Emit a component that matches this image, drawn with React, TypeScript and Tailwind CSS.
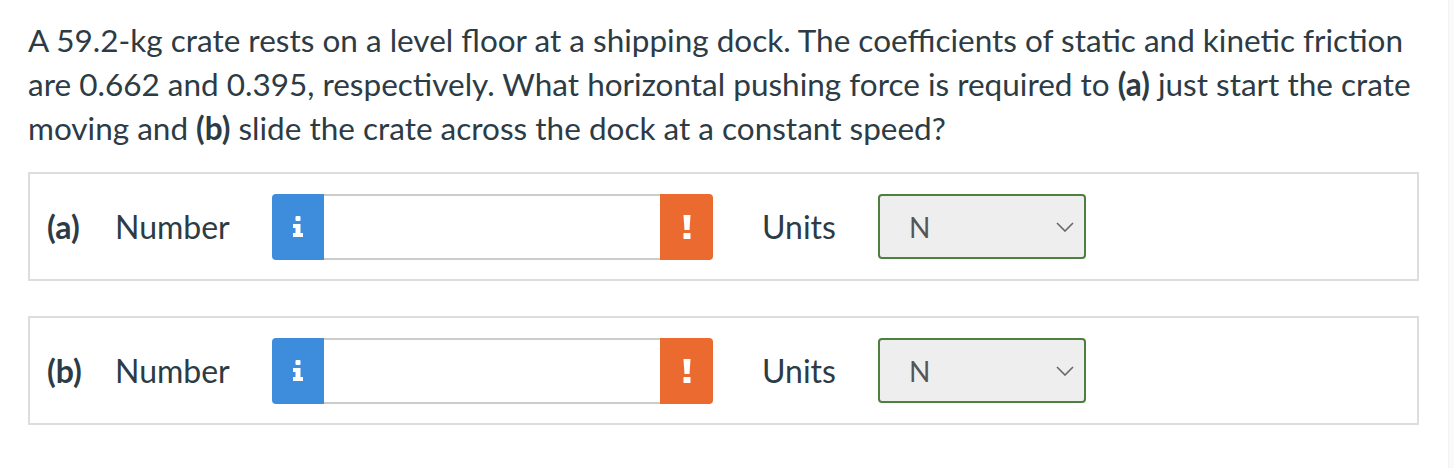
import React from "react";

const InfoIcon: React.FC = () => (
  <svg width="12" height="22" viewBox="0 0 12 22" fill="#fff">
    <rect x="3.5" y="0" width="5" height="5" rx="1" />
    <path d="M1 8h7.5v9H11v4H1v-4h2.5v-5H1z" />
  </svg>
);

const AlertIcon: React.FC = () => (
  <svg width="8" height="24" viewBox="0 0 8 24" fill="#fff">
    <path d="M0.5 0h7l-1 15h-5z" />
    <rect x="0.5" y="18" width="7" height="6" rx="0.5" />
  </svg>
);

const Chevron: React.FC = () => (
  <svg width="18" height="10" viewBox="0 0 18 10" fill="none" stroke="#666" strokeWidth="1.6">
    <path d="M1 1l8 8 8-8" />
  </svg>
);

const AnswerRow: React.FC<{ part: string }> = ({ part }) => (
  <div className="flex h-[109px] w-[1391px] items-center border-2 border-[#dddddd] pl-[17px] text-[32px]">
    <span className="w-[68px] font-bold">({part})</span>
    <span className="w-[157px]">Number</span>
    <div className="flex h-[66px] items-stretch">
      <button className="flex w-[52px] items-center justify-center rounded-l-[4px] bg-[#3e8ddd]">
        <InfoIcon />
      </button>
      <input
        className="w-[336px] border-y-2 border-[#cccccc] bg-white outline-none"
        type="text"
      />
      <button className="flex w-[53px] items-center justify-center rounded-r-[4px] bg-[#ea6a30]">
        <AlertIcon />
      </button>
    </div>
    <span className="ml-[49px] w-[116px]">Units</span>
    <div className="flex h-[65px] w-[208px] items-center justify-between rounded-[4px] border-2 border-[#4d7f41] bg-[#eeeeee] pl-[29px] pr-[10px]">
      <span className="text-[28px] text-[#555555]">N</span>
      <Chevron />
    </div>
  </div>
);

const App: React.FC = () => {
  return (
    <div className="flex h-[468px] w-[1454px] bg-white font-['Lato',sans-serif] leading-[44px] text-[#2d3b45]">
      <div className="flex-1 pl-[28px] pt-[18px]">
        <p className="mb-[22px] whitespace-nowrap text-[31.5px]">
          A 59.2-kg crate rests on a level floor at a shipping dock. The coefficients of static and kinetic friction
          <br />
          are 0.662 and 0.395, respectively. What horizontal pushing force is required to <b>(a)</b> just start the crate
          <br />
          moving and <b>(b)</b> slide the crate across the dock at a constant speed?
        </p>
        <div className="flex flex-col gap-[35px]">
          <AnswerRow part="a" />
          <AnswerRow part="b" />
        </div>
      </div>
      <div className="w-[6px] border-l border-[#f2f2f2] bg-[#fafafa]" />
    </div>
  );
};

export default App;
